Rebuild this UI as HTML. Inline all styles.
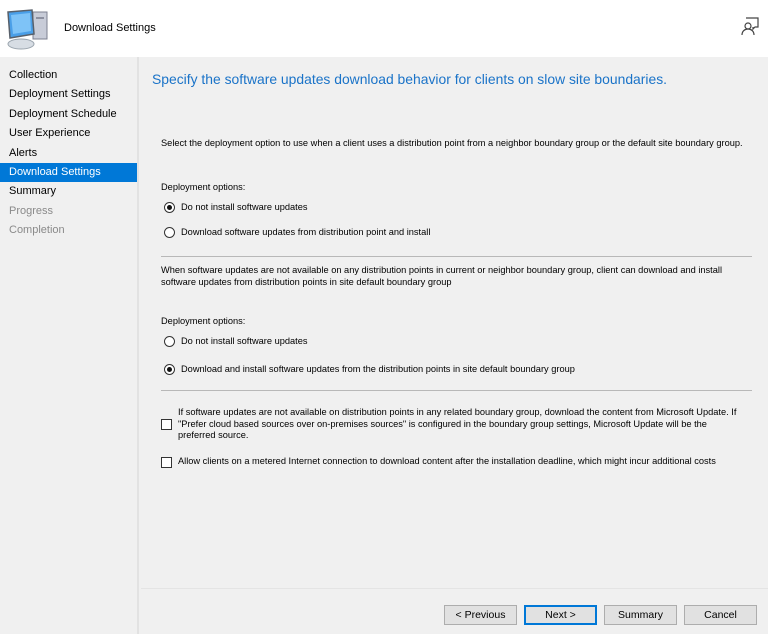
<!DOCTYPE html>
<html><head><meta charset="utf-8"><style>
*{margin:0;padding:0;box-sizing:border-box}
body{width:768px;height:634px;background:#f0f0f0;font-family:"Liberation Sans",sans-serif;position:relative;overflow:hidden;color:#000}
.hdr{position:absolute;left:0;top:0;width:768px;height:57px;background:#fff}
.nav{position:absolute;left:0;top:57px;width:139px;height:577px;background:#f0f0f0;border-right:2px solid #e2e2e2}
.nav div{height:19.4px;line-height:19.4px;padding-left:9px;font-size:11px}
.nav .sel{background:#0078d7;color:#fff}
.nav .dis{color:#8a8a8a}
.t{position:absolute;font-size:9.25px;white-space:nowrap;line-height:11.5px}
.rad{position:absolute;width:11px;height:11px;border:1px solid #333;border-radius:50%;background:#fff}
.rad.on::after{content:"";position:absolute;left:2px;top:2px;width:5px;height:5px;border-radius:50%;background:#111}
.chk{position:absolute;width:11px;height:11px;border:1px solid #333;background:#fff}
.hr{position:absolute;left:161px;width:591px;height:1px;background:#b8b8b8}
.btn{position:absolute;top:605px;height:20px;width:73px;border:1px solid #adadad;background:#e1e1e1;font-size:10.5px;text-align:center;line-height:18px}
</style></head><body>
<div class="hdr">
<svg style="position:absolute;left:5px;top:7px" width="46" height="44" viewBox="0 0 46 44">
<ellipse cx="16" cy="37" rx="13" ry="5" fill="#d7dde4" stroke="#9aa4ad"/>
<rect x="28" y="5" width="14" height="27" fill="#c8ccd8" stroke="#7c8090"/>
<rect x="31" y="10" width="8" height="2" fill="#8c90a0"/>
<path d="M3 5 L27 3 L29 27 L5 31 Z" fill="#4a9fe8" stroke="#58606a" stroke-width="1.5"/>
<path d="M6 8 L25 6 L26 24 L8 27 Z" fill="#7ec3f7"/>
</svg>
<div style="position:absolute;left:64px;top:22px;font-size:11px">Download Settings</div>
<svg style="position:absolute;left:740px;top:15px" width="22" height="22" viewBox="0 0 22 22" fill="none" stroke="#444" stroke-width="1.2">
<path d="M6 3h12v9h-3l-2 2v-2"/><circle cx="8" cy="11" r="3"/><path d="M2 20c0-4 3-6 6-6s6 2 6 6"/>
</svg>
</div>
<div class="nav">
<div style="margin-top:9px">Collection</div>
<div>Deployment Settings</div>
<div>Deployment Schedule</div>
<div>User Experience</div>
<div>Alerts</div>
<div class="sel">Download Settings</div>
<div>Summary</div>
<div class="dis">Progress</div>
<div class="dis">Completion</div>
</div>
<div style="position:absolute;left:152px;top:71px;font-size:13.9px;color:#1a73c8">Specify the software updates download behavior for clients on slow site boundaries.</div>
<div class="t" style="left:161px;top:138px">Select the deployment option to use when a client uses a distribution point from a neighbor boundary group or the default site boundary group.</div>
<div class="t" style="left:161px;top:182px">Deployment options:</div>
<div class="rad on" style="left:164px;top:202px"></div>
<div class="t" style="left:181px;top:202px">Do not install software updates</div>
<div class="rad" style="left:164px;top:227px"></div>
<div class="t" style="left:181px;top:227px">Download software updates from distribution point and install</div>
<div class="hr" style="top:256px"></div>
<div class="t" style="left:161px;top:265px">When software updates are not available on any distribution points in current or neighbor boundary group, client can download and install<br>software updates from distribution points in site default boundary group</div>
<div class="t" style="left:161px;top:316px">Deployment options:</div>
<div class="rad" style="left:164px;top:336px"></div>
<div class="t" style="left:181px;top:336px">Do not install software updates</div>
<div class="rad on" style="left:164px;top:364px"></div>
<div class="t" style="left:181px;top:364px">Download and install software updates from the distribution points in site default boundary group</div>
<div class="hr" style="top:390px"></div>
<div class="chk" style="left:161px;top:419px"></div>
<div class="t" style="left:178px;top:407px">If software updates are not available on distribution points in any related boundary group, download the content from Microsoft Update. If<br>"Prefer cloud based sources over on-premises sources" is configured in the boundary group settings, Microsoft Update will be the<br>preferred source.</div>
<div class="chk" style="left:161px;top:457px"></div>
<div class="t" style="left:178px;top:456px">Allow clients on a metered Internet connection to download content after the installation deadline, which might incur additional costs</div>
<div style="position:absolute;left:141px;top:588px;width:627px;height:1px;background:#e4e4e4"></div>
<div class="btn" style="left:444px">&lt; Previous</div>
<div class="btn" style="left:524px;border:2px solid #0078d7;line-height:16px">Next &gt;</div>
<div class="btn" style="left:604px">Summary</div>
<div class="btn" style="left:684px">Cancel</div>
</body></html>
